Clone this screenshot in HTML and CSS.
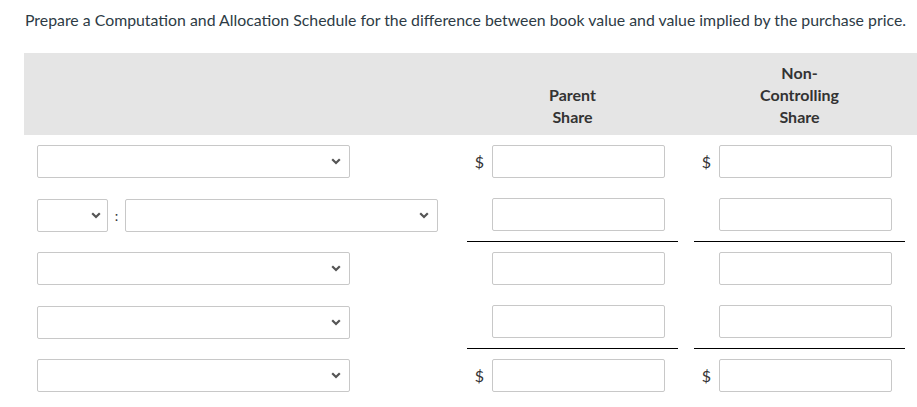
FILE: index.html
```html
<!DOCTYPE html>
<html>
<head>
<meta charset="utf-8">
<link rel="stylesheet" href="styles.css">
</head>
<body>
<div class="page">
  <p class="title">Prepare a Computation and Allocation Schedule for the difference between book value and value implied by the purchase price.</p>
  <div class="sched">
    <div class="row head">
      <div class="hcell"></div>
      <div class="hcell">Parent<br>Share</div>
      <div></div>
      <div class="hcell">Non-<br>Controlling<br>Share</div>
      <div></div>
    </div>
    <div class="row">
      <div class="lcell"><div class="select wide"><svg class="chev" width="10" height="7" viewBox="0 0 10 7"><path d="M1.2 1.2L5 5 8.8 1.2" fill="none" stroke="#555" stroke-width="2.2"/></svg></div></div>
      <div class="acell"><span class="cur">$</span><div class="input"></div></div>
      <div></div>
      <div class="acell"><span class="cur">$</span><div class="input"></div></div>
      <div></div>
    </div>
    <div class="row">
      <div class="lcell"><div class="select small"><svg class="chev" width="10" height="7" viewBox="0 0 10 7"><path d="M1.2 1.2L5 5 8.8 1.2" fill="none" stroke="#555" stroke-width="2.2"/></svg></div><span class="colon">:</span><div class="select wide"><svg class="chev" width="10" height="7" viewBox="0 0 10 7"><path d="M1.2 1.2L5 5 8.8 1.2" fill="none" stroke="#555" stroke-width="2.2"/></svg></div></div>
      <div class="acell ruled"><span class="cur"></span><div class="input"></div></div>
      <div></div>
      <div class="acell ruled"><span class="cur"></span><div class="input"></div></div>
      <div></div>
    </div>
    <div class="row">
      <div class="lcell"><div class="select wide"><svg class="chev" width="10" height="7" viewBox="0 0 10 7"><path d="M1.2 1.2L5 5 8.8 1.2" fill="none" stroke="#555" stroke-width="2.2"/></svg></div></div>
      <div class="acell"><span class="cur"></span><div class="input"></div></div>
      <div></div>
      <div class="acell"><span class="cur"></span><div class="input"></div></div>
      <div></div>
    </div>
    <div class="row">
      <div class="lcell"><div class="select wide"><svg class="chev" width="10" height="7" viewBox="0 0 10 7"><path d="M1.2 1.2L5 5 8.8 1.2" fill="none" stroke="#555" stroke-width="2.2"/></svg></div></div>
      <div class="acell ruled"><span class="cur"></span><div class="input"></div></div>
      <div></div>
      <div class="acell ruled"><span class="cur"></span><div class="input"></div></div>
      <div></div>
    </div>
    <div class="row">
      <div class="lcell"><div class="select wide"><svg class="chev" width="10" height="7" viewBox="0 0 10 7"><path d="M1.2 1.2L5 5 8.8 1.2" fill="none" stroke="#555" stroke-width="2.2"/></svg></div></div>
      <div class="acell"><span class="cur">$</span><div class="input"></div></div>
      <div></div>
      <div class="acell"><span class="cur">$</span><div class="input"></div></div>
      <div></div>
    </div>
  </div>
</div>
</body>
</html>
```
FILE: styles.css
```css
html, body {
  margin: 0;
  padding: 0;
  background: #fff;
}
body {
  font-family: Lato, "Open Sans", Arial, sans-serif;
  color: #333;
  font-size: 16px;
}
.page {
  padding-left: 24px;
}
.title {
  margin: 0 0 23px 1px;
  padding-top: 10px;
  line-height: 20px;
  font-size: 15.85px;
  color: #2d3b45;
  white-space: nowrap;
}
.row {
  display: grid;
  grid-template-columns: 443px 211px 16px 211px 1fr;
}
.head {
  height: 82px;
  background: #e5e5e5;
  align-items: end;
}
.hcell {
  font-weight: bold;
  text-align: center;
  line-height: 22px;
  padding-bottom: 7px;
  color: #333;
}
.lcell {
  display: flex;
  align-items: center;
  padding: 10px 0 10px 13px;
}
.select {
  box-sizing: border-box;
  height: 33px;
  border: 1px solid #c8c8c8;
  border-radius: 2px;
  background: #fff;
  display: flex;
  align-items: center;
  justify-content: flex-end;
}
.select.wide {
  width: 313px;
  padding-right: 8px;
}
.select.small {
  width: 71px;
  padding-right: 6px;
}
.colon {
  width: 17px;
  text-align: center;
  font-size: 14px;
  color: #333;
}
.acell {
  display: flex;
  align-items: center;
  padding: 10px 0;
}
.acell.ruled {
  border-bottom: 1px solid #000;
}
.cur {
  width: 25px;
  text-align: center;
  font-size: 16px;
  color: #333;
}
.input {
  box-sizing: border-box;
  width: 173px;
  height: 33px;
  border: 1px solid #c8c8c8;
  border-radius: 2px;
  background: #fff;
}
```
